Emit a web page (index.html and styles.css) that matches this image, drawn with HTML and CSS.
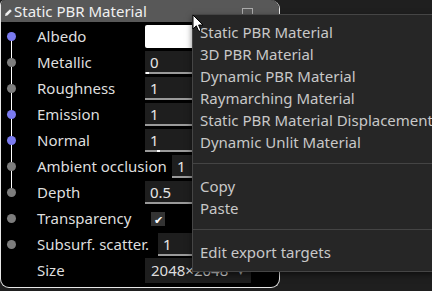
FILE: index.html
```html
<!doctype html>
<html lang="en">
<head>
<meta charset="utf-8">
<title>Static PBR Material</title>
<link rel="stylesheet" href="styles.css">
</head>
<body>

<div class="node">
  <div class="node-head">
    <svg class="pencil" width="9" height="9" viewBox="0 0 9 9"><path d="M1 8 L1.6 5.6 L6 1.2 L7.8 3 L3.4 7.4 Z" fill="#eee"/></svg>
    <span class="node-title">Static PBR Material</span>
    <span class="head-box"></span>
  </div>

  <div class="node-body">
    <div class="wire"></div>

    <div class="row"><i class="sock blue"></i><span class="lbl">Albedo</span><div class="color-field"></div></div>
    <div class="row"><i class="sock"></i><span class="lbl">Metallic</span><div class="field">0<b class="mark" style="left:1px"></b></div></div>
    <div class="row"><i class="sock"></i><span class="lbl">Roughness</span><div class="field">1</div></div>
    <div class="row"><i class="sock blue"></i><span class="lbl">Emission</span><div class="field">1</div></div>
    <div class="row"><i class="sock blue"></i><span class="lbl">Normal</span><div class="field">1<b class="mark" style="left:12px"></b></div></div>
    <div class="row"><i class="sock"></i><span class="lbl">Ambient occlusion</span><div class="field">1</div></div>
    <div class="row"><i class="sock"></i><span class="lbl">Depth</span><div class="field">0.5</div></div>
    <div class="row"><i class="sock"></i><span class="lbl">Transparency</span><span class="check">✔</span></div>
    <div class="row"><i class="sock"></i><span class="lbl">Subsurf. scatter.</span><div class="field">1</div></div>
    <div class="row"><i class="sock none"></i><span class="lbl">Size</span><div class="select">2048×2048<span class="caret">▾</span></div></div>
  </div>
</div>

<ul class="menu">
  <li>Static PBR Material</li>
  <li>3D PBR Material</li>
  <li>Dynamic PBR Material</li>
  <li>Raymarching Material</li>
  <li>Static PBR Material Displacement</li>
  <li>Dynamic Unlit Material</li>
  <li class="sep"></li>
  <li>Copy</li>
  <li>Paste</li>
  <li class="sep"></li>
  <li>Edit export targets</li>
</ul>

<svg class="cursor" width="13" height="19" viewBox="0 0 13 19">
  <path d="M1 1 L1 15 L4.3 11.8 L6.8 17.5 L9 16.6 L6.6 11 L11 11 Z" fill="#fff" stroke="#000" stroke-width="1"/>
</svg>

</body>
</html>
```

FILE: styles.css
```css
*{box-sizing:border-box;margin:0;padding:0}
body{
  background:#1f1f1f;width:432px;height:291px;overflow:hidden;position:relative;
  font-family:"Noto Sans",sans-serif;font-size:15px;color:#dedede
}

/* --- node ------------------------------------------------------------ */
.node{
  width:280px;background:#000;border:1px solid #e8e8e8;border-top:0;
  border-radius:5px 9px 9px 9px;overflow:hidden
}
.node-head{
  height:22px;background:#585858;display:flex;align-items:center;
  padding-left:3px;color:#f0f0f0
}
.pencil{margin-top:2px;margin-right:1px}
.node-title{line-height:22px}
.head-box{
  width:11px;height:11px;border:1px solid #aaa;margin-left:auto;margin-right:26px;
  margin-top:4px
}

.node-body{position:relative;padding:1px 0 4px}
.wire{position:absolute;left:10px;top:14px;width:1px;height:155px;background:#fff}

.row{height:26px;display:flex;align-items:center}
.sock{
  width:9px;height:9px;border-radius:50%;background:#7d7d7d;flex:none;
  margin-left:6px;margin-right:21px;position:relative
}
.sock.blue{background:#7b7bf0}
.sock.none{visibility:hidden}
.lbl{min-width:99px;margin-right:9px;white-space:nowrap;line-height:26px}

.color-field{width:110px;height:23px;background:#fff;border-radius:2px}
.field{
  width:110px;height:23px;background:#1e1e1e;padding-left:5px;line-height:22px;
  border-bottom:2px solid #9a9a9a;position:relative;color:#e6e6e6
}
.mark{position:absolute;bottom:-2px;width:3px;height:2px;background:#fff}
.check{
  width:14px;height:14px;background:#333;color:#fff;font-size:11px;
  display:flex;align-items:center;justify-content:center;margin-left:6px;margin-top:2px
}
.select{
  width:106px;height:25px;background:#1e1e1e;padding-left:6px;line-height:25px;
  display:flex;color:#ddd
}
.caret{margin-left:auto;margin-right:7px;font-size:11px;color:#bbb}

/* --- context menu ---------------------------------------------------- */
.menu{
  position:absolute;left:192px;top:14px;width:242px;list-style:none;
  background:#262626;border:1px solid #454545;padding:6px 0 8px;
  color:#c8c8c8;box-shadow:0 3px 6px rgba(0,0,0,.5)
}
.menu li{height:22px;line-height:22px;padding-left:7px;white-space:nowrap}
.menu li.sep{height:1px;background:#444;margin:10px 0 11px}

.cursor{position:absolute;left:192px;top:14px}
```
